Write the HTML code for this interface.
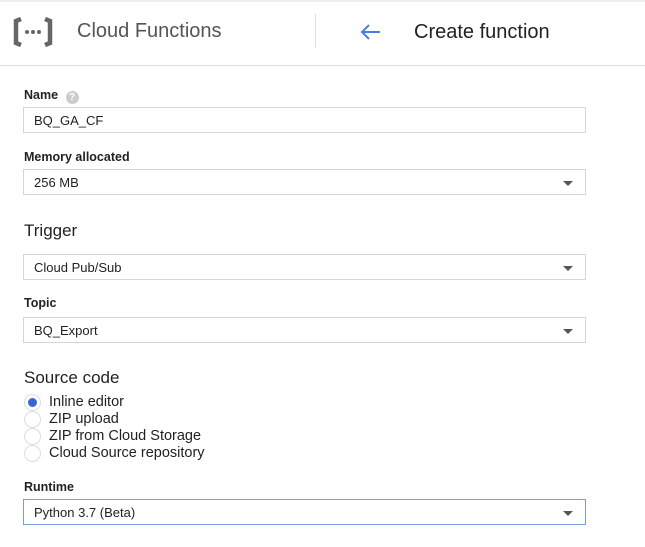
<!DOCTYPE html>
<html><head><style>
*{margin:0;padding:0;box-sizing:border-box}
body{width:645px;height:547px;background:#fff;font-family:"Liberation Sans",sans-serif;position:relative;overflow:hidden;color:#222}
.a{position:absolute}
.lbl{position:absolute;left:24px;font-size:12.5px;font-weight:bold;color:#222}
.box{position:absolute;left:23px;width:563px;height:26px;border:1px solid #d6d6d6;font-size:13px;padding:5px 0 0 10px;color:#222}
.box .c{position:absolute;right:12px;top:11px;width:0;height:0;border-left:5px solid transparent;border-right:5px solid transparent;border-top:5px solid #555}
.h{position:absolute;left:24px;font-size:17px;color:#222}
.r{position:absolute;left:24px;width:17px;height:17px;border:1px solid #ddd;border-radius:50%}
.rt{position:absolute;left:49px;font-size:14.5px;color:#222}
</style></head><body>
<div class="a" style="left:0;top:0;width:645px;height:2px;background:#eee"></div>
<svg class="a" style="left:12px;top:17px" width="42" height="30" viewBox="0 0 42 30">
<path d="M9 2 L4 4 L4 26 L9 28" fill="none" stroke="#666" stroke-width="4.5"/>
<path d="M33 2 L38 4 L38 26 L33 28" fill="none" stroke="#666" stroke-width="4.5"/>
<circle cx="15" cy="15" r="2" fill="#666"/><circle cx="21" cy="15" r="2" fill="#666"/><circle cx="27" cy="15" r="2" fill="#666"/>
</svg>
<div class="a" style="left:77px;top:20px;font-size:20px;color:#555">Cloud Functions</div>
<div class="a" style="left:315px;top:14px;width:1px;height:34px;background:#ddd"></div>
<svg class="a" style="left:358px;top:22px" width="24" height="20" viewBox="0 0 24 20"><path d="M22 10 H4 M11 3 L4 10 L11 17" fill="none" stroke="#4a7fe0" stroke-width="2"/></svg>
<div class="a" style="left:414px;top:21px;font-size:20px;color:#222">Create function</div>
<div class="a" style="left:0;top:65px;width:645px;height:1px;background:#ddd"></div>

<div class="lbl" style="top:88px">Name <span style="display:inline-block;width:13px;height:13px;border-radius:50%;background:#ccc;color:#fff;font-size:10px;text-align:center;line-height:13px;margin-left:4px;vertical-align:-1px">?</span></div>
<div class="box" style="top:107px">BQ_GA_CF</div>
<div class="lbl" style="top:150px">Memory allocated</div>
<div class="box" style="top:169px">256 MB<span class="c"></span></div>
<div class="h" style="top:221px">Trigger</div>
<div class="box" style="top:254px">Cloud Pub/Sub<span class="c"></span></div>
<div class="lbl" style="top:296px">Topic</div>
<div class="box" style="top:317px">BQ_Export<span class="c"></span></div>
<div class="h" style="top:368px">Source code</div>
<div class="r" style="top:394px"><div style="position:absolute;left:3px;top:3px;width:9px;height:9px;border-radius:50%;background:#3367d6"></div></div>
<div class="rt" style="top:394px">Inline editor</div>
<div class="r" style="top:411px"></div><div class="rt" style="top:411px">ZIP upload</div>
<div class="r" style="top:428px"></div><div class="rt" style="top:428px">ZIP from Cloud Storage</div>
<div class="r" style="top:445px"></div><div class="rt" style="top:445px">Cloud Source repository</div>
<div class="lbl" style="top:480px">Runtime</div>
<div class="box" style="top:499px;border-color:#7b9be0">Python 3.7 (Beta)<span class="c"></span></div>
</body></html>
